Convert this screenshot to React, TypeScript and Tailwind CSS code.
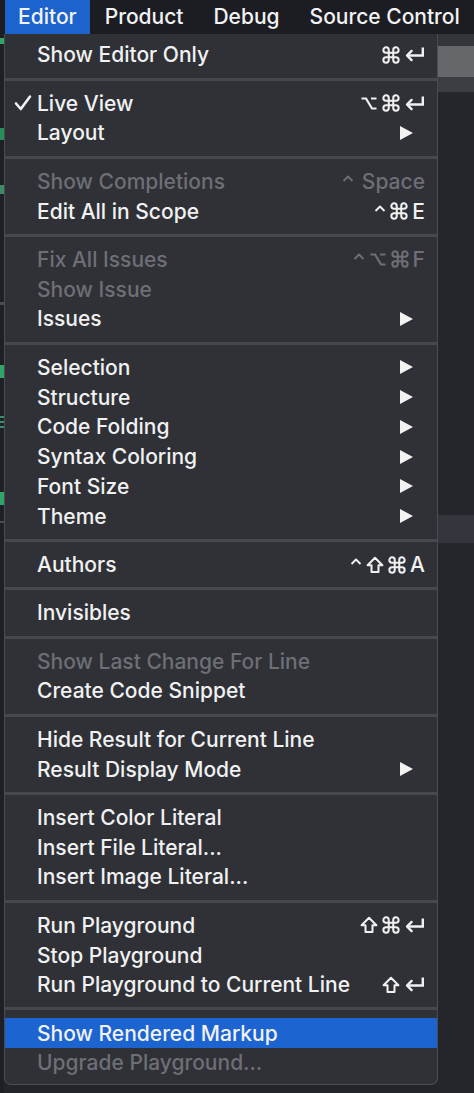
import React from "react";

type Key = "cmd" | "opt" | "shift" | "ret" | "ctrl" | string;

type Item = {
  label: string;
  keys?: Key[];
  submenu?: boolean;
  disabled?: boolean;
  checked?: boolean;
  highlighted?: boolean;
};

const groups: Item[][] = [
  [{ label: "Show Editor Only", keys: ["cmd", "ret"] }],
  [
    { label: "Live View", keys: ["opt", "cmd", "ret"], checked: true },
    { label: "Layout", submenu: true },
  ],
  [
    { label: "Show Completions", keys: ["ctrl", "Space"], disabled: true },
    { label: "Edit All in Scope", keys: ["ctrl", "cmd", "E"] },
  ],
  [
    { label: "Fix All Issues", keys: ["ctrl", "opt", "cmd", "F"], disabled: true },
    { label: "Show Issue", disabled: true },
    { label: "Issues", submenu: true },
  ],
  [
    { label: "Selection", submenu: true },
    { label: "Structure", submenu: true },
    { label: "Code Folding", submenu: true },
    { label: "Syntax Coloring", submenu: true },
    { label: "Font Size", submenu: true },
    { label: "Theme", submenu: true },
  ],
  [{ label: "Authors", keys: ["ctrl", "shift", "cmd", "A"] }],
  [{ label: "Invisibles" }],
  [
    { label: "Show Last Change For Line", disabled: true },
    { label: "Create Code Snippet" },
  ],
  [
    { label: "Hide Result for Current Line" },
    { label: "Result Display Mode", submenu: true },
  ],
  [
    { label: "Insert Color Literal" },
    { label: "Insert File Literal..." },
    { label: "Insert Image Literal..." },
  ],
  [
    { label: "Run Playground", keys: ["shift", "cmd", "ret"] },
    { label: "Stop Playground" },
    { label: "Run Playground to Current Line", keys: ["shift", "ret"] },
  ],
  [
    { label: "Show Rendered Markup", highlighted: true },
    { label: "Upgrade Playground...", disabled: true },
  ],
];

// keyboard glyphs drawn as small svgs so they keep the mac menu look
const KeyGlyph = ({ k }: { k: Key }) => {
  const stroke = { fill: "none", stroke: "currentColor", strokeWidth: 2, strokeLinecap: "round" as const, strokeLinejoin: "round" as const };
  if (k === "cmd")
    return (
      <svg width="18" height="18" viewBox="0 0 16 16">
        <path
          d="M6 6 V3.6 A2.4 2.4 0 1 0 3.6 6 H12.4 A2.4 2.4 0 1 0 10 3.6 V12.4 A2.4 2.4 0 1 0 12.4 10 H3.6 A2.4 2.4 0 1 0 6 12.4 Z"
          {...stroke}
          strokeWidth={1.8}
        />
      </svg>
    );
  if (k === "opt")
    return (
      <svg width="18" height="15" viewBox="0 0 18 15">
        <path d="M1.5 2.5 H6 L12 12.5 H16.5 M11 2.5 H16.5" {...stroke} strokeWidth={2.2} strokeLinecap="butt" strokeLinejoin="miter" />
      </svg>
    );
  if (k === "shift")
    return (
      <svg width="18" height="18" viewBox="0 0 17 17">
        <path d="M8.5 1.6 L15.5 8.8 H11.8 V15.2 H5.2 V8.8 H1.5 Z" {...stroke} strokeWidth={1.9} />
      </svg>
    );
  if (k === "ret")
    return (
      <svg width="21" height="17" viewBox="0 0 21 17">
        <path d="M18.8 1.5 V9.5 H3" {...stroke} strokeWidth={2.4} strokeLinecap="butt" strokeLinejoin="miter" />
        <path d="M7.6 4.9 L3 9.5 L7.6 14.1" {...stroke} strokeWidth={2.4} />
      </svg>
    );
  if (k === "ctrl")
    return (
      <svg width="12" height="17" viewBox="0 0 12 17">
        <path d="M1.5 8 L6 3.5 L10.5 8" {...stroke} strokeWidth={1.9} strokeLinecap="butt" />
      </svg>
    );
  return <span className={`leading-none ${k.length > 1 ? "ml-[4px]" : ""}`}>{k}</span>;
};

const Check = () => (
  <svg width="18" height="18" viewBox="0 0 18 18" className="absolute left-[9px] top-[6px]">
    <path d="M2 9.5 L6.8 15 L16 2.5" fill="none" stroke="#f2f2f3" strokeWidth="2.6" strokeLinecap="round" strokeLinejoin="round" />
  </svg>
);

const Arrow = () => (
  <svg width="15" height="16" viewBox="0 0 15 16" className="mr-[23px]">
    <polygon points="1,1 14,8 1,15" fill="#f2f2f3" />
  </svg>
);

const Row = ({ item }: { item: Item }) => {
  const color = item.disabled ? "text-[#6d6f75]" : "text-[#f1f1f2]";
  return (
    <div
      className={`relative flex h-[29.8px] items-center justify-between pl-[32px] ${color} ${
        item.highlighted ? "bg-[#1c64d0]" : ""
      }`}
    >
      {item.checked && <Check />}
      <span className="leading-none">{item.label}</span>
      {item.keys && (
        <span className="mr-[12px] flex items-center gap-[4px]">
          {item.keys.map((k, i) => (
            <KeyGlyph key={i} k={k} />
          ))}
        </span>
      )}
      {item.submenu && <Arrow />}
    </div>
  );
};

export default function App() {
  return (
    <div
      className="flex h-[1093px] w-[474px] flex-col overflow-hidden bg-[#24252b] text-[21px] font-medium"
      style={{ fontFamily: "Inter, 'Noto Sans', 'DejaVu Sans', sans-serif" }}
    >
      <div className="flex h-[34px] shrink-0 items-center bg-[#1c1d22] pl-[5px] text-[21px] text-[#f3f3f4]">
        <div className="flex h-full items-center bg-[#1c63cd] px-[13px]">Editor</div>
        <div className="flex h-full items-center px-[15px]">Product</div>
        <div className="flex h-full items-center px-[15px]">Debug</div>
        <div className="flex h-full items-center whitespace-nowrap px-[15px]">Source Control</div>
      </div>

      <div className="flex flex-1">
        <div className="flex w-[4px] shrink-0 flex-col bg-[#1f2025]">
          <div className="mt-[4px] h-[6px] bg-[#2fa56a]" />
          <div className="mt-[84px] h-[12px] bg-[#2a8e5c]" />
          <div className="mt-[45px] h-[9px] bg-[#3d8a67]" />
          <div className="mt-[108px] h-[3px] bg-[#4a4c53]" />
          <div className="mt-[60px] h-[13px] bg-[#2fa56a]" />
          <div className="mt-[38px] h-[2px] bg-[#3b8e6a]" />
          <div className="mt-[3px] h-[2px] bg-[#3b8e6a]" />
          <div className="mt-[3px] h-[2px] bg-[#3b8e6a]" />
          <div className="mt-[64px] h-[13px] bg-[#2fa56a]" />
          <div className="mt-[16px] h-[2px] bg-[#4a4c53]" />
        </div>

        <div className="h-[1051px] w-[434px] shrink-0 rounded-b-[7px] border border-t-0 border-[#4a4c53] bg-[#2f3137] pb-[5px] pt-[6px]">
          {groups.map((group, gi) => (
            <div key={gi}>
              {gi > 0 && (
                <div className="flex h-[18.5px] items-center">
                  <div className="h-[3px] w-full bg-[#464850]" />
                </div>
              )}
              {group.map((item) => (
                <Row key={item.label} item={item} />
              ))}
            </div>
          ))}
        </div>

        <div className="flex flex-1 flex-col">
          <div className="h-[12px] bg-[#34353a]" />
          <div className="h-[31px] bg-[#66676b]" />
          <div className="h-[15px] bg-[#3d3e44]" />
          <div className="h-[423px] bg-[#25262c]" />
          <div className="h-[28px] bg-[#34363d]" />
          <div className="flex-1 bg-[#25262c]" />
        </div>
      </div>
    </div>
  );
}
